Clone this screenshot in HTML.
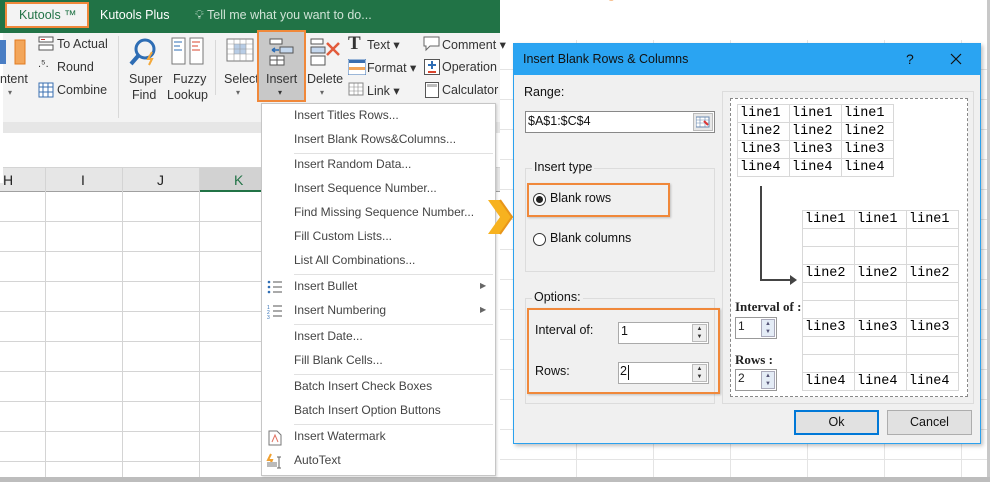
<!DOCTYPE html>
<html><head><meta charset="utf-8">
<style>
*{margin:0;padding:0;box-sizing:border-box}
body{width:990px;height:482px;position:relative;overflow:hidden;background:#fff;font-family:"Segoe UI","Liberation Sans",sans-serif;font-size:12px;color:#333}
.a{position:absolute}
.t{position:absolute;white-space:nowrap}
.mi{position:absolute;left:294px;color:#444;font-size:12px;white-space:nowrap}
.sep{position:absolute;left:294px;width:199px;height:1px;background:#e1e1e1}
table.g{position:absolute;border-collapse:collapse}
table.g td{border:1px solid #d8d8d8;width:52px;height:18px;padding:0 0 0 2px;line-height:15px;font-family:"Liberation Mono",monospace;font-size:13.5px;color:#000}
.spin{position:absolute;background:#fff;border:1px solid #aaa}
</style></head><body>
<!-- right background grid -->
<div class="a" style="left:500px;top:0;width:487px;height:478px;background:#fff"></div>
<div class="a" style="left:500px;top:40px;width:487px;height:438px;background:
repeating-linear-gradient(to bottom,transparent 0,transparent 29px,#e4e4e4 29px,#e4e4e4 30px),
repeating-linear-gradient(to right,transparent 0,transparent 76px,#e4e4e4 76px,#e4e4e4 77px)"></div>
<div class="t" style="left:578px;top:-16px;color:#f08020;font-weight:bold;font-size:16px">Merge into one to the list</div>
<div class="a" style="left:987px;top:0;width:3px;height:482px;background:#c8c8c8"></div>
<div class="a" style="left:0;top:477px;width:990px;height:5px;background:#bdbdbd"></div>

<!-- left excel -->
<div class="a" style="left:0;top:0;width:500px;height:33px;background:#217346"></div>
<div class="a" style="left:5px;top:2px;width:84px;height:26px;background:#f3f3f3;border:2px solid #f0883a"></div>
<div class="t" style="left:19px;top:8px;color:#217346;font-size:12.5px">Kutools ™</div>
<div class="t" style="left:100px;top:8px;color:#fff;font-size:12.5px">Kutools Plus</div>
<div class="t" style="left:195px;top:8px;color:#cfe3d6;font-size:12.5px">💡︎ Tell me what you want to do...</div>
<div class="a" style="left:0;top:33px;width:500px;height:89px;background:#f3f3f3"></div>
<div class="a" style="left:0;top:122px;width:500px;height:11px;background:#e6e6e6"></div>
<div class="a" style="left:0;top:133px;width:500px;height:35px;background:#fff;border-bottom:1px solid #d4d4d4"></div>
<div class="a" style="left:0;top:168px;width:500px;height:24px;background:#e6e6e6;border-bottom:1px solid #a0a0a0"></div>
<div class="a" style="left:199px;top:168px;width:62px;height:24px;background:#d2d2d2;border-bottom:2px solid #217346"></div>
<div class="t" style="left:3px;top:172px;font-size:14px;color:#222">H</div>
<div class="t" style="left:81px;top:172px;font-size:14px;color:#222">I</div>
<div class="t" style="left:157px;top:172px;font-size:14px;color:#222">J</div>
<div class="t" style="left:234px;top:172px;font-size:14px;color:#217346">K</div>
<div class="a" style="left:0;top:192px;width:262px;height:285px;background:#fff"></div>
<div class="a" style="left:0;top:192px;width:262px;height:285px;background:
repeating-linear-gradient(to bottom,transparent 0,transparent 29px,#d4d4d4 29px,#d4d4d4 30px)"></div>
<div class="a" style="left:45px;top:168px;width:1px;height:309px;background:#d4d4d4"></div>
<div class="a" style="left:122px;top:168px;width:1px;height:309px;background:#d4d4d4"></div>
<div class="a" style="left:199px;top:168px;width:1px;height:309px;background:#d4d4d4"></div>
<div class="a" style="left:0;top:33px;width:3px;height:150px;background:#fff"></div>

<!-- ribbon items -->
<svg class="a" style="left:0;top:38px" width="30" height="30"><rect x="0" y="2" width="6" height="24" fill="#4a7ec4"/><rect x="15" y="2" width="10" height="24" fill="#f3a65a" stroke="#e07b20"/></svg>
<div class="t" style="left:0;top:72px;font-size:12.5px">ntent</div>
<div class="t" style="left:8px;top:88px;font-size:8px;color:#666">▾</div>
<svg class="a" style="left:38px;top:36px" width="16" height="16"><rect x="1" y="1" width="14" height="5" fill="#fff" stroke="#555"/><rect x="1" y="9" width="14" height="5" fill="#fff" stroke="#555"/><rect x="3" y="3" width="4" height="1" fill="#c33"/></svg>
<div class="t" style="left:57px;top:37px;font-size:12.5px">To Actual</div>
<div class="t" style="left:38px;top:58px;font-size:11px;color:#333">.⁵.</div>
<div class="t" style="left:57px;top:60px;font-size:12.5px">Round</div>
<svg class="a" style="left:38px;top:82px" width="16" height="16"><rect x="1" y="1" width="14" height="14" fill="#fff" stroke="#3a6fb0"/><path d="M1 5H15M1 10H15M5 1V15M10 1V15" stroke="#3a6fb0"/></svg>
<div class="t" style="left:57px;top:83px;font-size:12.5px">Combine</div>
<div class="a" style="left:118px;top:36px;width:1px;height:82px;background:#d8d8d8"></div>
<svg class="a" style="left:128px;top:36px" width="32" height="32"><circle cx="17" cy="13" r="9" fill="none" stroke="#2e6db4" stroke-width="3"/><path d="M10 20L3 28" stroke="#2e6db4" stroke-width="4"/><path d="M24 16l-4 7h4l-3 6" stroke="#f3a83a" stroke-width="2" fill="none"/></svg>
<div class="t" style="left:129px;top:72px;font-size:12.5px">Super</div>
<div class="t" style="left:132px;top:88px;font-size:12.5px">Find</div>
<svg class="a" style="left:171px;top:37px" width="34" height="30"><rect x="1" y="1" width="13" height="26" fill="#fff" stroke="#777"/><rect x="19" y="1" width="13" height="26" fill="#fff" stroke="#777"/><path d="M3 5h8M3 9h6M3 13h8" stroke="#2e6db4"/><path d="M21 5h8M21 9h6M21 13h8" stroke="#d9442c"/></svg>
<div class="t" style="left:173px;top:72px;font-size:12.5px">Fuzzy</div>
<div class="t" style="left:167px;top:88px;font-size:12.5px">Lookup</div>
<div class="a" style="left:215px;top:40px;width:1px;height:55px;background:#d8d8d8"></div>
<svg class="a" style="left:226px;top:38px" width="30" height="26"><rect x="1" y="1" width="26" height="22" fill="#fff" stroke="#777"/><rect x="8" y="6" width="12" height="10" fill="#b8cde6"/><path d="M1 6H27M1 11H27M1 16H27M8 1V23M14 1V23M20 1V23" stroke="#999" stroke-width=".6"/></svg>
<div class="t" style="left:224px;top:72px;font-size:12.5px">Select</div>
<div class="t" style="left:236px;top:88px;font-size:8px;color:#666">▾</div>
<div class="a" style="left:257px;top:30px;width:49px;height:72px;background:#c8c8c8;border:2px solid #f0883a"></div>
<svg class="a" style="left:268px;top:38px" width="28" height="28"><rect x="2" y="1" width="12" height="5" fill="#fff" stroke="#555"/><rect x="12" y="9" width="13" height="6" fill="#c5d8ee" stroke="#555"/><path d="M4 12h7M4 12l3-2M4 12l3 2" stroke="#2e6db4" stroke-width="1.5"/><rect x="2" y="18" width="14" height="9" fill="#fff" stroke="#555"/><path d="M2 22h14M9 18v9" stroke="#555"/></svg>
<div class="t" style="left:266px;top:72px;font-size:12.5px">Insert</div>
<div class="t" style="left:278px;top:88px;font-size:8px;color:#333">▾</div>
<svg class="a" style="left:310px;top:38px" width="32" height="28"><rect x="1" y="1" width="12" height="5" fill="#fff" stroke="#555"/><rect x="1" y="9" width="14" height="6" fill="#c5d8ee" stroke="#555"/><path d="M17 5l12 12M29 5L17 17" stroke="#e25b3b" stroke-width="2.5"/><rect x="1" y="18" width="14" height="9" fill="#fff" stroke="#555"/></svg>
<div class="t" style="left:307px;top:72px;font-size:12.5px">Delete</div>
<div class="t" style="left:320px;top:88px;font-size:8px;color:#666">▾</div>
<div class="t" style="left:348px;top:33px;font-size:19px;font-weight:bold;font-family:'Liberation Serif',serif;color:#333">T</div>
<div class="t" style="left:367px;top:37px;font-size:12.5px">Text ▾</div>
<svg class="a" style="left:348px;top:59px" width="18" height="16"><rect x="0" y="0" width="18" height="16" fill="#fff" stroke="#3a6fb0"/><rect x="1" y="1" width="16" height="3" fill="#3a6fb0"/><rect x="1" y="8" width="16" height="3" fill="#f3a65a"/></svg>
<div class="t" style="left:367px;top:60px;font-size:12.5px">Format ▾</div>
<svg class="a" style="left:348px;top:82px" width="18" height="16"><rect x="1" y="1" width="14" height="12" fill="#fff" stroke="#888"/><path d="M1 5h14M1 9h14M6 1v12M10 1v12" stroke="#888" stroke-width=".6"/></svg>
<div class="t" style="left:367px;top:83px;font-size:12.5px">Link ▾</div>
<svg class="a" style="left:423px;top:36px" width="18" height="16"><path d="M1 1h15v9H7l-4 4v-4H1z" fill="#fff" stroke="#666"/></svg>
<div class="t" style="left:442px;top:37px;font-size:12.5px">Comment ▾</div>
<svg class="a" style="left:424px;top:59px" width="16" height="16"><rect x=".5" y=".5" width="15" height="15" fill="#fff" stroke="#555"/><path d="M4 6h8M8 2v8" stroke="#2e6db4" stroke-width="2"/><path d="M4 13h8" stroke="#d9442c" stroke-width="2"/></svg>
<div class="t" style="left:442px;top:60px;font-size:12.5px">Operation</div>
<svg class="a" style="left:425px;top:82px" width="14" height="16"><rect x=".5" y=".5" width="13" height="15" fill="#fff" stroke="#555"/><rect x="2" y="2" width="10" height="3" fill="#bbb"/></svg>
<div class="t" style="left:442px;top:83px;font-size:12.5px">Calculator</div>

<!-- menu -->
<div class="a" style="left:261px;top:103px;width:235px;height:373px;background:#fff;border:1px solid #c6c6c6;box-shadow:1px 1px 2px rgba(0,0,0,.15)"></div>
<div class="mi" style="top:108px">Insert Titles Rows...</div>
<div class="mi" style="top:132px">Insert Blank Rows&amp;Columns...</div>
<div class="sep" style="top:153px"></div>
<div class="mi" style="top:157px">Insert Random Data...</div>
<div class="mi" style="top:181px">Insert Sequence Number...</div>
<div class="mi" style="top:205px">Find Missing Sequence Number...</div>
<div class="mi" style="top:229px">Fill Custom Lists...</div>
<div class="mi" style="top:253px">List All Combinations...</div>
<div class="sep" style="top:274px"></div>
<svg class="a" style="left:267px;top:280px" width="16" height="16"><circle cx="2" cy="2" r="1.3" fill="#2e6db4"/><circle cx="2" cy="7" r="1.3" fill="#2e6db4"/><circle cx="2" cy="12" r="1.3" fill="#2e6db4"/><path d="M6 2h9M6 7h9M6 12h9" stroke="#555"/></svg>
<div class="mi" style="top:279px">Insert Bullet</div>
<div class="t" style="left:480px;top:281px;font-size:8px;color:#666">▶</div>
<svg class="a" style="left:267px;top:304px" width="16" height="16"><path d="M6 2h9M6 7h9M6 12h9" stroke="#555"/><text x="0" y="5" font-size="5" fill="#2e6db4">1</text><text x="0" y="10" font-size="5" fill="#2e6db4">2</text><text x="0" y="15" font-size="5" fill="#2e6db4">3</text></svg>
<div class="mi" style="top:303px">Insert Numbering</div>
<div class="t" style="left:480px;top:305px;font-size:8px;color:#666">▶</div>
<div class="sep" style="top:324px"></div>
<div class="mi" style="top:329px">Insert Date...</div>
<div class="mi" style="top:353px">Fill Blank Cells...</div>
<div class="sep" style="top:374px"></div>
<div class="mi" style="top:379px">Batch Insert Check Boxes</div>
<div class="mi" style="top:403px">Batch Insert Option Buttons</div>
<div class="sep" style="top:424px"></div>
<svg class="a" style="left:268px;top:430px" width="14" height="16"><path d="M1 1h8l4 4v10H1z" fill="#fff" stroke="#777"/><path d="M4 12l3-7 3 7" stroke="#e07060" fill="none"/></svg>
<div class="mi" style="top:429px">Insert Watermark</div>
<svg class="a" style="left:266px;top:453px" width="18" height="16"><path d="M5 1l-3 6h4l-2 5" stroke="#f0a030" stroke-width="2" fill="none"/><rect x="1" y="9" width="10" height="5" fill="#bbb"/><path d="M13 4v11M11 4h4M11 15h4" stroke="#666"/></svg>
<div class="mi" style="top:453px">AutoText</div>

<!-- chevron -->
<svg class="a" style="left:486px;top:198px" width="28" height="38"><path d="M2 2h12l12 17-12 17H2l12-17z" fill="#f7b21f"/><path d="M14 2l12 17-12 17" fill="none" stroke="#e8961a" stroke-width="2"/></svg>

<!-- dialog -->
<div class="a" style="left:513px;top:43px;width:468px;height:401px;background:#f0f0f0;border:1px solid #2aa1ee;box-shadow:2px 2px 4px rgba(0,0,0,.25)"></div>
<div class="a" style="left:514px;top:44px;width:466px;height:31px;background:#2aa4f2"></div>
<div class="t" style="left:523px;top:52px;font-size:12.5px;color:#111">Insert Blank Rows &amp; Columns</div>
<div class="t" style="left:906px;top:51px;font-size:14px;color:#111">?</div>
<svg class="a" style="left:950px;top:53px" width="12" height="12"><path d="M1 1l10 10M11 1L1 11" stroke="#111" stroke-width="1.2"/></svg>
<div class="t" style="left:524px;top:85px;font-size:12.5px;color:#111">Range:</div>
<div class="a" style="left:525px;top:111px;width:190px;height:22px;background:#fff;border:1px solid #888"></div>
<div class="t" style="left:528px;top:114px;font-size:12.5px;color:#111">$A$1:$C$4</div>
<div class="a" style="left:693px;top:113px;width:20px;height:18px;background:#e8e8e8;border:1px solid #bbb"></div>
<svg class="a" style="left:696px;top:116px" width="14" height="12"><rect x="0" y="1" width="13" height="10" fill="#fff" stroke="#6a8ab0"/><path d="M0 4h13M0 7h13M4 1v10M9 1v10" stroke="#6a8ab0" stroke-width=".6"/><path d="M8 5l4 4" stroke="#d33" stroke-width="2"/></svg>

<div class="a" style="left:525px;top:168px;width:190px;height:104px;border:1px solid #dcdcdc"></div>
<div class="t" style="left:532px;top:160px;font-size:12.5px;color:#111;background:#f0f0f0;padding:0 2px">Insert type</div>
<div class="a" style="left:527px;top:183px;width:143px;height:34px;border:2px solid #f0883a;box-shadow:1px 1px 2px rgba(0,0,0,.2)"></div>
<div class="a" style="left:533px;top:193px;width:13px;height:13px;border-radius:50%;border:1px solid #333;background:#fff"></div>
<div class="a" style="left:536px;top:196px;width:7px;height:7px;border-radius:50%;background:#222"></div>
<div class="t" style="left:550px;top:191px;font-size:12.5px;color:#111">Blank rows</div>
<div class="a" style="left:533px;top:233px;width:13px;height:13px;border-radius:50%;border:1px solid #333;background:#fff"></div>
<div class="t" style="left:550px;top:231px;font-size:12.5px;color:#111">Blank columns</div>

<div class="a" style="left:525px;top:298px;width:190px;height:106px;border:1px solid #dcdcdc"></div>
<div class="t" style="left:532px;top:290px;font-size:12.5px;color:#111;background:#f0f0f0;padding:0 2px">Options:</div>
<div class="a" style="left:527px;top:308px;width:193px;height:86px;border:2px solid #f0883a;box-shadow:1px 1px 2px rgba(0,0,0,.2)"></div>
<div class="t" style="left:535px;top:323px;font-size:12.5px;color:#111">Interval of:</div>
<div class="spin" style="left:618px;top:322px;width:91px;height:22px"></div>
<div class="t" style="left:621px;top:324px;font-size:12.5px;color:#111">1</div>
<div class="a" style="left:692px;top:324px;width:15px;height:18px;background:#eee;border:1px solid #bbb;font-size:6px;line-height:8px;text-align:center">▲<br>▼</div>
<div class="t" style="left:535px;top:364px;font-size:12.5px;color:#111">Rows:</div>
<div class="spin" style="left:618px;top:362px;width:91px;height:22px"></div>
<div class="t" style="left:620px;top:364px;font-size:12.5px;color:#111">2</div>
<div class="a" style="left:628px;top:365px;width:1px;height:15px;background:#111"></div>
<div class="a" style="left:692px;top:364px;width:15px;height:18px;background:#eee;border:1px solid #bbb;font-size:6px;line-height:8px;text-align:center">▲<br>▼</div>

<div class="a" style="left:722px;top:91px;width:252px;height:313px;border:1px solid #dcdcdc"></div>
<div class="a" style="left:730px;top:98px;width:238px;height:299px;background:#fff;border:1px dashed #888"></div>
<table class="g" style="left:737px;top:104px">
<tr><td>line1</td><td>line1</td><td>line1</td></tr>
<tr><td>line2</td><td>line2</td><td>line2</td></tr>
<tr><td>line3</td><td>line3</td><td>line3</td></tr>
<tr><td>line4</td><td>line4</td><td>line4</td></tr></table>
<svg class="a" style="left:758px;top:185px" width="40" height="100"><path d="M3 1V95H33" stroke="#444" stroke-width="2" fill="none"/><path d="M32 90l7 5-7 5z" fill="#444"/></svg>
<table class="g" style="left:802px;top:210px">
<tr><td>line1</td><td>line1</td><td>line1</td></tr>
<tr><td></td><td></td><td></td></tr><tr><td></td><td></td><td></td></tr>
<tr><td>line2</td><td>line2</td><td>line2</td></tr>
<tr><td></td><td></td><td></td></tr><tr><td></td><td></td><td></td></tr>
<tr><td>line3</td><td>line3</td><td>line3</td></tr>
<tr><td></td><td></td><td></td></tr><tr><td></td><td></td><td></td></tr>
<tr><td>line4</td><td>line4</td><td>line4</td></tr></table>
<div class="t" style="left:735px;top:299px;font-family:'Liberation Serif',serif;font-weight:bold;font-size:13px;color:#222">Interval of :</div>
<div class="spin" style="left:735px;top:317px;width:42px;height:22px;border-color:#999"></div>
<div class="t" style="left:738px;top:319px;font-size:12px;color:#222">1</div>
<div class="a" style="left:761px;top:319px;width:14px;height:18px;background:#e4ecf6;border:1px solid #aab;font-size:6px;line-height:8px;text-align:center;color:#557">▲<br>▼</div>
<div class="t" style="left:735px;top:352px;font-family:'Liberation Serif',serif;font-weight:bold;font-size:13px;color:#222">Rows :</div>
<div class="spin" style="left:735px;top:369px;width:42px;height:22px;border-color:#999"></div>
<div class="t" style="left:738px;top:371px;font-size:12px;color:#222">2</div>
<div class="a" style="left:761px;top:371px;width:14px;height:18px;background:#e4ecf6;border:1px solid #aab;font-size:6px;line-height:8px;text-align:center;color:#557">▲<br>▼</div>

<div class="a" style="left:794px;top:410px;width:85px;height:25px;background:#e1e1e1;border:2px solid #0078d7;text-align:center;line-height:21px;font-size:12.5px;color:#111">Ok</div>
<div class="a" style="left:887px;top:410px;width:85px;height:25px;background:#e1e1e1;border:1px solid #adadad;text-align:center;line-height:23px;font-size:12.5px;color:#111">Cancel</div>
</body></html>
